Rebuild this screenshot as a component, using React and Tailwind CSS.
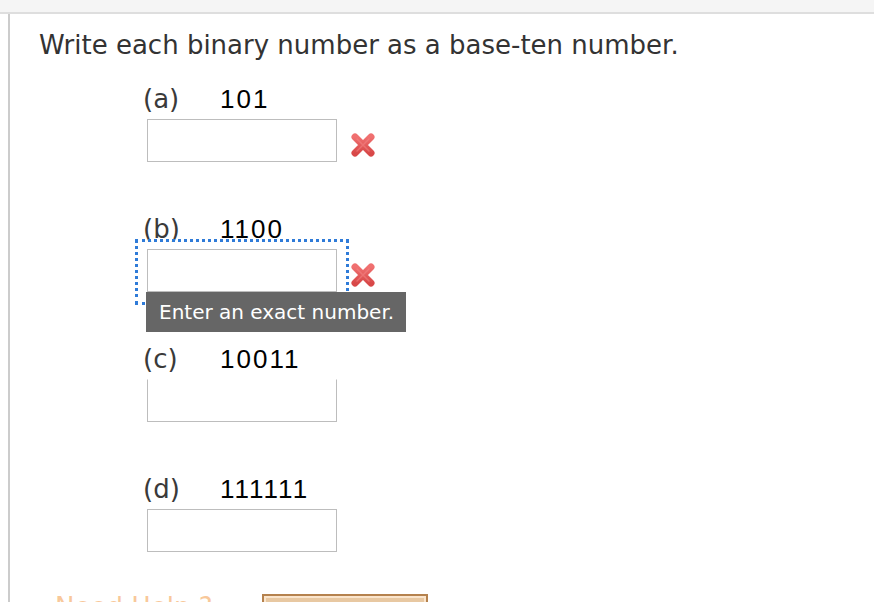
import React from "react";

const verdana = { fontFamily: '"DejaVu Sans", Verdana, sans-serif' };
const arial = { fontFamily: '"Liberation Sans", Arial, sans-serif' };

// Red "incorrect" cross
function WrongMark() {
  return (
    <svg width="28" height="28" viewBox="0 0 28 28" className="shrink-0">
      <defs>
        <linearGradient id="xg" x1="0" y1="0" x2="0" y2="1">
          <stop offset="0" stopColor="#f07070" />
          <stop offset="1" stopColor="#d84848" />
        </linearGradient>
      </defs>
      <path d="M6 6 L22 22 M22 6 L6 22" stroke="url(#xg)" strokeWidth="7" strokeLinecap="round" />
      <path d="M8 8 L20 20 M20 8 L8 20" stroke="#f58a8a" strokeWidth="1.5" strokeLinecap="round" opacity="0.5" />
    </svg>
  );
}

function Item({ label, value, wrong, focused, noTop }) {
  return (
    <div className="mb-[52px]">
      <div className="flex items-baseline h-[30px]">
        <span className="w-[77px] text-[26px] leading-[30px] text-[#3a3a3a]" style={verdana}>({label})</span>
        <span className="text-[26px] leading-[30px] tracking-[2px] text-black" style={arial}>{value}</span>
      </div>
      <div className="relative mt-[5px] ml-1 flex items-start">
        {focused && (
          <div className="absolute -left-3 -top-[10px] w-[214px] h-[66px] border-[3px] border-dotted border-[#2f7bd8]" />
        )}
        <div className={`relative w-[190px] h-[43px] bg-white border border-[#bdbdbd] ${noTop ? "border-t-transparent" : ""}`} />
        {wrong && (
          <div className="relative ml-[12px] mt-[12px]">
            <WrongMark />
          </div>
        )}
        {focused && (
          <div
            className="absolute -left-px top-[43px] w-[260px] h-[40px] bg-[#666666] text-white text-[20px] pl-[13px] flex items-center"
            style={verdana}
          >
            Enter an exact number.
          </div>
        )}
      </div>
    </div>
  );
}

export default function App() {
  return (
    <div className="h-[602px] overflow-hidden bg-white flex flex-col">
      <div className="h-[14px] shrink-0 bg-[#f5f5f5] border-b-2 border-[#dedede]" />
      <div className="ml-2 flex-1 border-l-2 border-[#cccccc] pl-[29px] pt-4">
        <h1 className="text-[26px] leading-[30px] text-[#333333]" style={verdana}>
          Write each binary number as a base-ten number.
        </h1>
        <div className="mt-6 pl-[104px]">
          <Item label="a" value="101" wrong />
          <Item label="b" value="1100" wrong focused />
          <Item label="c" value="10011" noTop />
          <Item label="d" value="111111" />
        </div>
        <div className="-mt-[10px] flex items-start">
          <span className="ml-4 -mt-[2px] w-[207px] text-[26px] leading-[30px] text-[#f8c89a]" style={verdana}>
            Need Help ?
          </span>
          <div className="w-[166px] h-[40px] border-2 border-[#b5824e] bg-[#e8c8a2] shadow-[inset_0_0_0_2px_#fbe5cc]" />
        </div>
      </div>
    </div>
  );
}
